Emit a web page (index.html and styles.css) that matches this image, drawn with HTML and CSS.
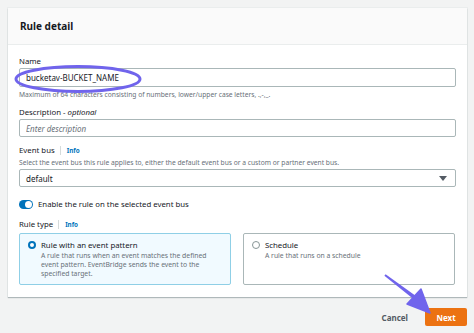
FILE: index.html
```html
<!DOCTYPE html>
<html lang="en">
  <head>
    <meta charset="utf-8" />
    <title>Rule detail</title>
    <link rel="stylesheet" href="styles.css">
  </head>
  <body>
    <div class="panel">
      <div class="panel__header">
        <h2>Rule detail</h2>
      </div>
      <div class="panel__body">
        <div class="field">
          <label class="field__label">Name</label>
          <div class="field__control">
            <input class="input" type="text" value="bucketav-BUCKET_NAME" />
            <svg class="mark" width="132" height="32" viewBox="0 0 132 32">
              <ellipse cx="66" cy="16" rx="62" ry="12.5" fill="none" stroke="#7064ec" stroke-width="3" />
            </svg>
          </div>
          <p class="field__hint">Maximum of 64 characters consisting of numbers, lower/upper case letters, .,-,_.</p>
        </div>

        <div class="field">
          <label class="field__label">Description - <i>optional</i></label>
          <input class="input" type="text" placeholder="Enter description" />
        </div>

        <div class="field">
          <label class="field__label">Event bus <span class="info">Info</span></label>
          <p class="field__hint field__hint--top">Select the event bus this rule applies to, either the default event bus or a custom or partner event bus.</p>
          <div class="select">
            <span>default</span>
            <span class="select__caret"></span>
          </div>
        </div>

        <div class="toggle">
          <span class="toggle__switch"><span class="toggle__knob"></span></span>
          <span>Enable the rule on the selected event bus</span>
        </div>

        <div class="field">
          <label class="field__label">Rule type <span class="info">Info</span></label>
          <div class="tiles">
            <div class="tile tile--checked">
              <span class="radio radio--on"></span>
              <div>
                <div class="tile__title">Rule with an event pattern</div>
                <div class="tile__text">A rule that runs when an event matches the defined event pattern. EventBridge sends the event to the specified target.</div>
              </div>
            </div>
            <div class="tile">
              <span class="radio"></span>
              <div>
                <div class="tile__title">Schedule</div>
                <div class="tile__text">A rule that runs on a schedule</div>
              </div>
            </div>
          </div>
        </div>
      </div>
    </div>

    <div class="actions">
      <span class="actions__cancel">Cancel</span>
      <span class="actions__next">Next</span>
    </div>

    <svg class="pointer" width="60" height="60" viewBox="0 0 60 60">
      <polygon points="4.4,7.8 5.6,6.2 35.2,27.4 32.8,30.6" fill="#7064ec" />
      <polygon points="27,36 41,21 50,45" fill="#7064ec" stroke="#7064ec" stroke-width="1.5" stroke-linejoin="round" />
    </svg>
  </body>
</html>
```

FILE: styles.css
```css
body {
  margin: 0;
  background: #f2f3f3;
  font-family: "Noto Sans", "Open Sans", sans-serif;
  color: #16191f;
  width: 474px;
  height: 333px;
  position: relative;
  overflow: hidden;
}

.panel {
  margin: 8px 7px 0 8px;
  background: #fff;
  box-shadow: 0 1px 1px rgba(0, 28, 36, .25), 0 0 0 1px #eaeded;
}

.panel__header {
  background: #fafafa;
  border-bottom: 1px solid #eaeded;
  height: 36px;
  display: flex;
  align-items: center;
  padding: 0 12px;
}

.panel__header h2 {
  margin: 0;
  font-size: 10px;
  font-weight: 700;
}

.panel__body {
  padding: 10px 12px 12px 11px;
}

.field {
  margin-bottom: 7px;
}

.field__label {
  display: block;
  font-size: 7.8px;
  line-height: 12px;
  margin-bottom: 1px;
}

.field__label i {
  font-style: italic;
}

.info {
  color: #0073bb;
  font-weight: 700;
  font-size: 6.3px;
  margin-left: 3px;
  padding-left: 6px;
  border-left: 1px solid #d5dbdb;
}

.field__control {
  position: relative;
}

.input {
  display: block;
  box-sizing: border-box;
  width: 437px;
  height: 18px;
  border: 1px solid #aab7b8;
  border-radius: 2px;
  padding: 0 6px;
  font: 8px "Noto Sans", sans-serif;
  color: #16191f;
  outline: none;
}

.field__control .input {
  height: 19px;
}

.input::placeholder {
  color: #687078;
  font-style: italic;
}

.mark {
  position: absolute;
  left: -7px;
  top: -5px;
}

.field__hint {
  margin: 3px 0 0;
  font-size: 6.7px;
  line-height: 9px;
  color: #687078;
}

.field__hint--top {
  margin: 0 0 2px;
}

.select {
  box-sizing: border-box;
  width: 437px;
  height: 18px;
  border: 1px solid #aab7b8;
  border-radius: 2px;
  padding: 0 8px 0 6px;
  font-size: 8px;
  display: flex;
  align-items: center;
  justify-content: space-between;
}

.select__caret {
  width: 0;
  height: 0;
  border-left: 4px solid transparent;
  border-right: 4px solid transparent;
  border-top: 5px solid #545b64;
}

.toggle {
  display: flex;
  align-items: center;
  gap: 5px;
  font-size: 7.8px;
  height: 12px;
  margin: 11px 0 8px;
}

.toggle__switch {
  width: 14px;
  height: 9px;
  border-radius: 5px;
  background: #0073bb;
  position: relative;
}

.toggle__knob {
  position: absolute;
  right: 1px;
  top: 1px;
  width: 7px;
  height: 7px;
  border-radius: 50%;
  background: #fff;
}

.tiles {
  display: flex;
  gap: 12px;
  margin-top: 2px;
}

.tile {
  box-sizing: border-box;
  flex: 1;
  height: 52px;
  border: 1px solid #aab7b8;
  border-radius: 2px;
  padding: 5px 8px;
  display: flex;
  gap: 5px;
  align-items: flex-start;
}

.tile--checked {
  background: #f1faff;
  border-color: #8fcfe6;
}

.radio {
  flex: none;
  box-sizing: border-box;
  width: 8px;
  height: 8px;
  margin-top: 2px;
  border-radius: 50%;
  border: 1px solid #879596;
  background: #fff;
}

.radio--on {
  border: 2.5px solid #0073bb;
}

.tile__title {
  font-size: 7.8px;
  line-height: 12px;
}

.tile__text {
  font-size: 6.8px;
  line-height: 9px;
  color: #687078;
}

.panel__body > .field:last-child {
  margin-bottom: 0;
}

.actions {
  display: flex;
  justify-content: flex-end;
  align-items: center;
  gap: 17px;
  margin: 11px 7px 0 0;
}

.actions__cancel {
  font-size: 8px;
  font-weight: 700;
  color: #545b64;
}

.actions__next {
  background: #ec7211;
  color: #fff;
  font-size: 8px;
  font-weight: 700;
  width: 42px;
  height: 18px;
  display: flex;
  align-items: center;
  justify-content: center;
  border-radius: 2px;
}

.pointer {
  position: absolute;
  left: 380px;
  top: 268px;
  overflow: visible;
}
```
